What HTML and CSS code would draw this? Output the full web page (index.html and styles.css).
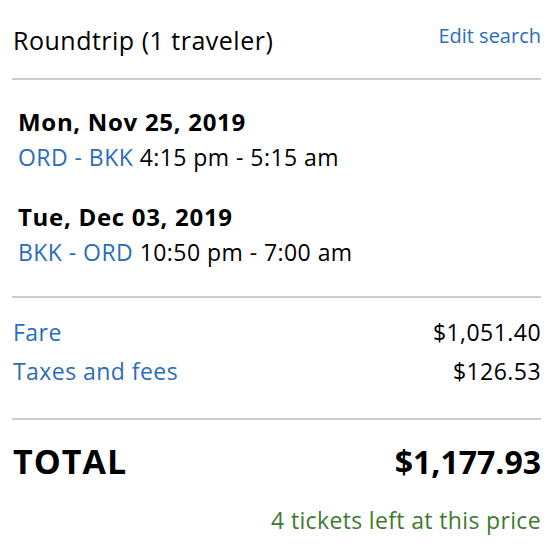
FILE: index.html
```html
<!DOCTYPE html>
<html lang="en">
<head>
    <meta charset="UTF-8">
    <title>Trip summary</title>
    <link rel="stylesheet" href="styles.css">
</head>
<body>

<div class="summary">
    <div class="summary-head">
        <span class="trip-type">Roundtrip (1 traveler)</span>
        <a class="edit-link" href="#">Edit search</a>
    </div>

    <!-- flights -->
    <div class="flights">
        <div class="flight">
            <div class="flight-date">Mon, Nov 25, 2019</div>
            <div class="flight-info"><span class="route">ORD - BKK</span> 4:15 pm - 5:15 am</div>
        </div>
        <div class="flight">
            <div class="flight-date">Tue, Dec 03, 2019</div>
            <div class="flight-info"><span class="route">BKK - ORD</span> 10:50 pm - 7:00 am</div>
        </div>
    </div>

    <!-- price breakdown -->
    <div class="prices">
        <div class="price-row">
            <span class="price-label">Fare</span>
            <span>$1,051.40</span>
        </div>
        <div class="price-row">
            <span class="price-label">Taxes and fees</span>
            <span>$126.53</span>
        </div>
    </div>

    <div class="total">
        <span class="total-label">TOTAL</span>
        <span class="total-amount">$1,177.93</span>
    </div>
    <div class="tickets-left">4 tickets left at this price</div>
</div>

</body>
</html>
```

FILE: styles.css
```css
body {
    margin: 0;
    font-family: "Open Sans", Arial, sans-serif;
    color: #000;
    background: #fff;
}
.summary {
    padding: 0 13px 0 12px;
}
.summary-head {
    display: flex;
    justify-content: space-between;
    align-items: flex-start;
    padding-top: 23px;
    height: 55px;
    border-bottom: 2px solid #cccccc;
}
.trip-type {
    font-size: 25px;
    line-height: 34px;
    letter-spacing: 0.5px;
    padding-left: 1px;
}
.edit-link {
    font-size: 20px;
    line-height: 26px;
    color: #2b6db9;
    text-decoration: none;
}
.flights {
    padding: 24px 0 26px 6px;
    border-bottom: 2px solid #cccccc;
}
.flight + .flight {
    margin-top: 24px;
}
.flight-date {
    font-size: 24px;
    font-weight: bold;
    line-height: 35px;
    letter-spacing: 0.7px;
}
.flight-info {
    font-size: 23px;
    line-height: 36px;
    letter-spacing: 0.45px;
}
.route {
    color: #2b6db9;
}
.prices {
    padding: 15px 0 27px 1px;
    border-bottom: 2px solid #cccccc;
}
.price-row {
    display: flex;
    justify-content: space-between;
    font-size: 23px;
    line-height: 39px;
    letter-spacing: 0.45px;
}
.price-label {
    color: #2b6db9;
}
.total {
    display: flex;
    justify-content: space-between;
    align-items: baseline;
    font-weight: bold;
    line-height: 46px;
    margin-top: 18px;
    padding-left: 1px;
}
.total-label {
    font-size: 34px;
    letter-spacing: 1px;
}
.total-amount {
    font-size: 32px;
}
.tickets-left {
    text-align: right;
    font-size: 23px;
    line-height: 36px;
    letter-spacing: 0.35px;
    color: #3f7a2f;
    margin-top: 17px;
}
```
